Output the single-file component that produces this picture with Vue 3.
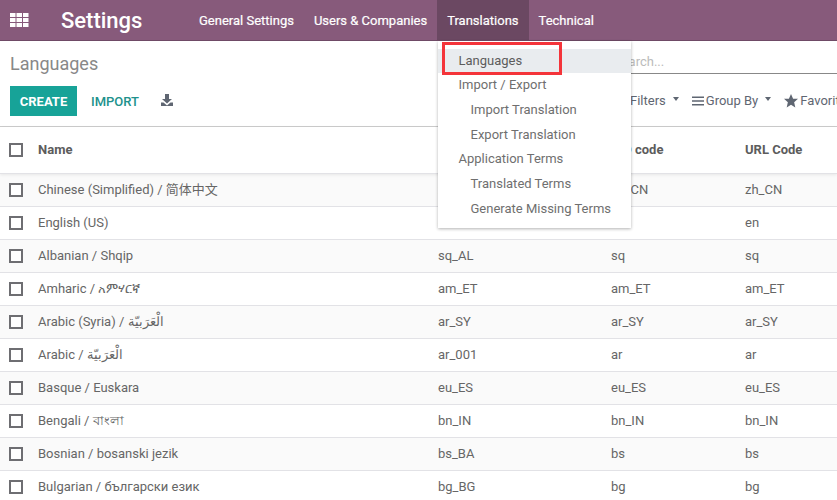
<template>
  <div class="page">
    <header class="navbar">
      <span class="apps">
        <svg viewBox="0 0 19 15" width="19" height="15">
          <g fill="#fff">
            <template v-for="r in 3" :key="r">
              <rect v-for="c in 3" :key="c" :x="(c - 1) * 6.5" :y="(r - 1) * 5" width="5.5" height="4" />
            </template>
          </g>
        </svg>
      </span>
      <span class="brand">Settings</span>
      <nav class="menu">
        <a v-for="item in navItems" :key="item" :class="{ open: item === 'Translations' }">{{ item }}</a>
      </nav>
    </header>

    <section class="panel">
      <div class="panel-left">
        <div class="crumb">Languages</div>
        <div class="buttons">
          <button class="btn-create">CREATE</button>
          <button class="btn-import">IMPORT</button>
          <svg class="download" viewBox="0 0 14 14" width="14" height="14">
            <path d="M5 1h4v5h3L7 10.500 2 6h3z" fill="#5f6672" />
            <path d="M1 9.500h2.500L7 12.500l3.500-3H13V13H1z" fill="#5f6672" />
          </svg>
        </div>
      </div>
      <div class="panel-right">
        <div class="search">Search...</div>
        <div class="filters">
          <span class="filter-item">
            <svg viewBox="0 0 12 12" width="12" height="12"><path d="M0 1h12L7.500 6.500V11L4.500 12V6.500z" fill="#5f6672" /></svg>
            Filters<i class="caret"></i>
          </span>
          <span class="filter-item">
            <svg viewBox="0 0 12 12" width="12" height="12"><path d="M0 1.500h12v1.500H0zM0 5.250h12v1.500H0zM0 9h12v1.500H0z" fill="#5f6672" /></svg>
            Group By<i class="caret"></i>
          </span>
          <span class="filter-item">
            <svg viewBox="0 0 12 12" width="14" height="14"><path d="M6 0l1.800 4H12L8.700 7l1 4.600L6 9.300l-3.700 2.300 1-4.600L0 4h4.200z" fill="#5f6672" /></svg>
            Favorites
          </span>
        </div>
      </div>
    </section>

    <div class="table">
      <div class="row head">
        <span class="check"><i></i></span>
        <span class="cell">Name</span>
        <span class="cell">Locale Code</span>
        <span class="cell">ISO code</span>
        <span class="cell">URL Code</span>
      </div>
      <div v-for="lang in languages" :key="lang.name" class="row">
        <span class="check"><i></i></span>
        <span class="cell">{{ lang.name }}</span>
        <span class="cell">{{ lang.locale }}</span>
        <span class="cell">{{ lang.iso }}</span>
        <span class="cell">{{ lang.url }}</span>
      </div>
    </div>

    <div class="dropdown">
      <a v-for="entry in dropdown" :key="entry.label" :class="{ active: entry.active, sub: entry.sub }">{{ entry.label }}</a>
    </div>
    <div class="highlight"></div>
  </div>
</template>

<script setup>
const navItems = ['General Settings', 'Users & Companies', 'Translations', 'Technical']

const dropdown = [
  { label: 'Languages', active: true },
  { label: 'Import / Export' },
  { label: 'Import Translation', sub: true },
  { label: 'Export Translation', sub: true },
  { label: 'Application Terms' },
  { label: 'Translated Terms', sub: true },
  { label: 'Generate Missing Terms', sub: true },
]

const languages = [
  { name: 'Chinese (Simplified) / 简体中文', locale: 'zh_CN', iso: 'zh_CN', url: 'zh_CN' },
  { name: 'English (US)', locale: 'en_US', iso: 'en', url: 'en' },
  { name: 'Albanian / Shqip', locale: 'sq_AL', iso: 'sq', url: 'sq' },
  { name: 'Amharic / አምሃርኛ', locale: 'am_ET', iso: 'am_ET', url: 'am_ET' },
  { name: 'Arabic (Syria) / الْعَرَبيّة', locale: 'ar_SY', iso: 'ar_SY', url: 'ar_SY' },
  { name: 'Arabic / الْعَرَبيّة', locale: 'ar_001', iso: 'ar', url: 'ar' },
  { name: 'Basque / Euskara', locale: 'eu_ES', iso: 'eu_ES', url: 'eu_ES' },
  { name: 'Bengali / বাংলা', locale: 'bn_IN', iso: 'bn_IN', url: 'bn_IN' },
  { name: 'Bosnian / bosanski jezik', locale: 'bs_BA', iso: 'bs', url: 'bs' },
  { name: 'Bulgarian / български език', locale: 'bg_BG', iso: 'bg', url: 'bg' },
]
</script>

<style>
html, body { margin: 0; overflow: hidden; background: #fff; }
</style>

<style scoped>
.page {
  position: relative;
  width: 837px;
  height: 500px;
  overflow: hidden;
  font-family: Roboto, "Noto Sans CJK SC", sans-serif;
  font-size: 13px;
  color: #666;
  background: #fff;
}
.navbar {
  display: flex;
  align-items: center;
  height: 40px;
  border-bottom: 1px solid #6f4a66;
  background: #875a7b;
  color: #fff;
}
.apps { display: flex; margin-left: 10px; width: 51px; }
.brand { font-size: 22px; font-weight: 500; width: 128px; }
.menu { display: flex; height: 100%; }
.menu a {
  display: flex;
  align-items: center;
  padding: 0 10px;
  color: #fff;
  font-weight: 400;
  -webkit-text-stroke: 0.2px #fff;
}
.menu a.open { background: #6b4862; }
.panel {
  display: flex;
  height: 85px;
  border-bottom: 1px solid #ccc;
}
.panel-left { width: 438px; padding-left: 10px; box-sizing: border-box; }
.crumb { font-size: 18px; color: #888; margin-top: 12px; line-height: 22px; }
.buttons { display: flex; align-items: center; margin-top: 11px; }
.btn-create {
  width: 67px;
  height: 30px;
  border: 0;
  padding: 0;
  background: #17a398;
  color: #fff;
  font: 700 13px Roboto, sans-serif;
}
.btn-import {
  border: 0;
  background: none;
  padding: 0;
  margin-left: 14px;
  color: #21918c;
  font: 500 13px Roboto, sans-serif;
}
.download { margin-left: 21px; margin-top: -2px; }
.panel-right { flex: 1; min-width: 0; }
.search {
  height: 32px;
  line-height: 41px;
  padding-left: 176px;
  border-bottom: 1px solid #888;
  color: #bbb;
}
.filters {
  display: flex;
  gap: 13px;
  margin-top: 19px;
  margin-left: 178px;
  white-space: nowrap;
}
.filter-item { display: flex; align-items: center; gap: 2px; color: #5f6672; }
.caret {
  width: 0;
  height: 0;
  margin-left: 5px;
  margin-top: -3px;
  border: 3.500px solid transparent;
  border-top: 4px solid #5f6672;
  border-bottom: 0;
}
.row {
  display: grid;
  grid-template-columns: 38px 400px 173px 134px 1fr;
  align-items: center;
  height: 32px;
  border-bottom: 1px solid #e2e2e6;
  white-space: nowrap;
}
.cell { line-height: 16px; margin-top: -1px; }
.row:nth-child(even) { background: #fafafa; }
.row.head {
  height: 46px;
  font-weight: 700;
  color: #5c5c5c;
  box-shadow: 0 1px 3px rgba(0, 0, 0, 0.08);
  position: relative;
}
.check { display: flex; padding-left: 9px; }
.check i {
  width: 10px;
  height: 10px;
  border: 2px solid #6e6e72;
  background: #fff;
}
.dropdown {
  position: absolute;
  left: 438px;
  top: 41px;
  width: 193px;
  padding: 7.500px 0 6.500px;
  background: #fff;
  box-shadow: 0 1px 3px rgba(0, 0, 0, 0.3);
}
.dropdown a {
  display: block;
  height: 24.700px;
  line-height: 24.700px;
  padding-left: 20.500px;
  color: #6f6f6f;
}
.dropdown a.sub { padding-left: 32.500px; }
.dropdown a.active { background: #e9ecef; color: #5c5c5c; }
.highlight {
  position: absolute;
  left: 442px;
  top: 42px;
  width: 114px;
  height: 27px;
  border: 3px solid #f4343a;
}
</style>
